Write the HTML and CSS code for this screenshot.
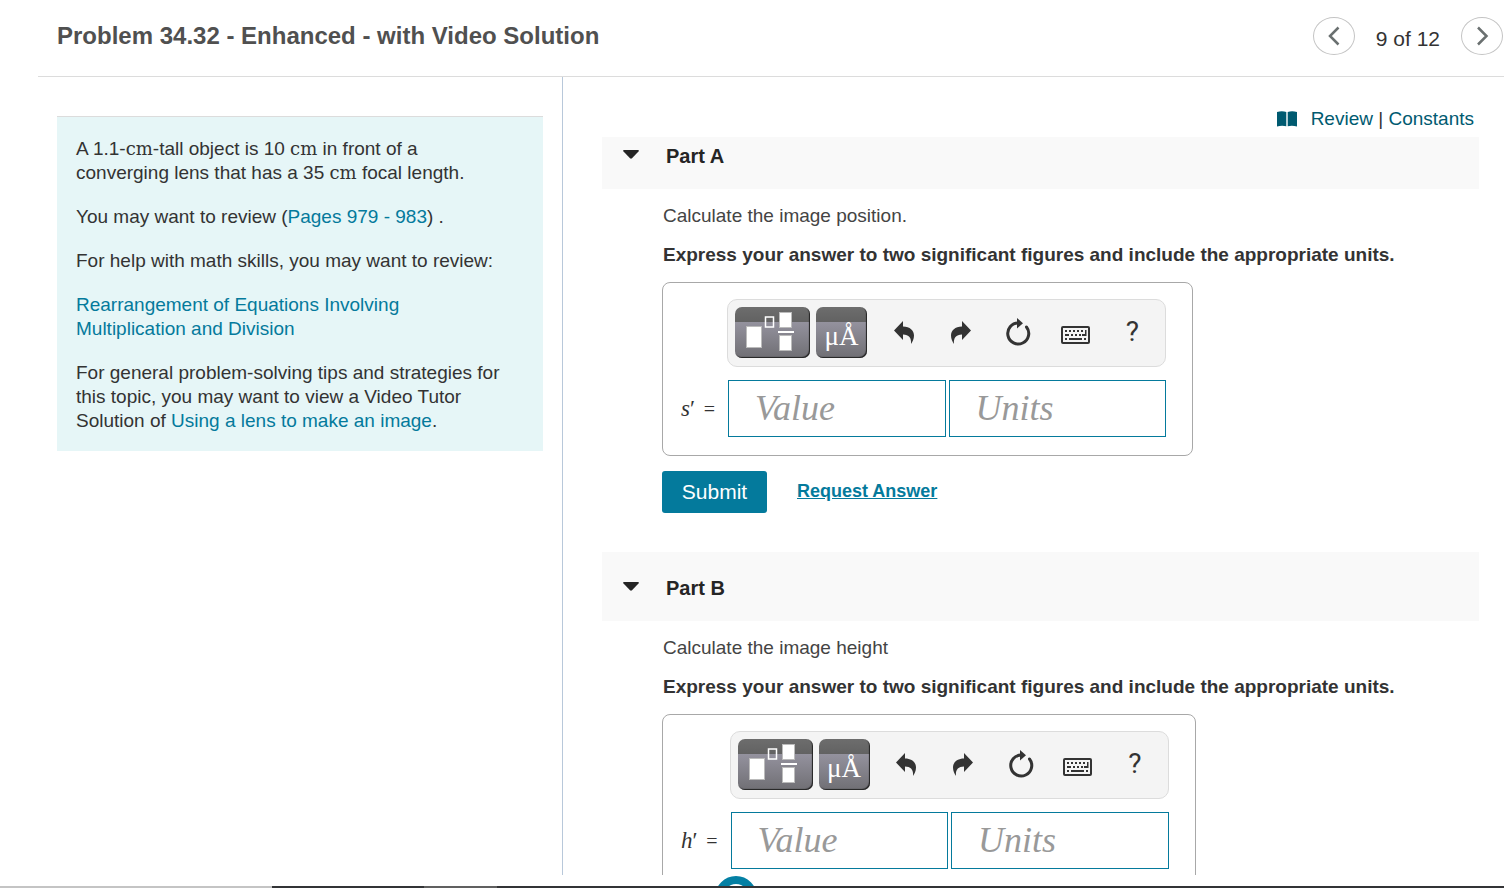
FILE: index.html
```html
<!DOCTYPE html>
<html lang="en">
<head>
<meta charset="utf-8">
<title>Problem 34.32 - Enhanced - with Video Solution</title>
<link rel="stylesheet" href="styles.css">
</head>
<body>
<svg class="defs" aria-hidden="true">
  <symbol id="undo" viewBox="0 0 20 23"><path d="M0 9.500 9 0V5.500C16 5.500 20 9.500 20 14.500 20 18 18.500 21 17 23 17.600 17 15 13.500 9 13.500V19Z"/></symbol>
  <symbol id="redo" viewBox="0 0 20 23"><path d="M20 9.500 11 0V5.500C4 5.500 0 9.500 0 14.500 0 18 1.500 21 3 23 2.400 17 5 13.500 11 13.500V19Z"/></symbol>
  <symbol id="reset" viewBox="0 0 26 28"><path d="M13.500 5A10.500 10.500 0 1 0 21.500 9" fill="none" stroke="currentColor" stroke-width="3" stroke-linecap="round"/><path d="M12 0 18 5.300 12 10.600Z"/></symbol>
  <symbol id="keyboard" viewBox="0 0 29 18"><rect x="1" y="1" width="27" height="16" rx="1" fill="none" stroke="currentColor" stroke-width="2"/><path d="M4 4h2v2H4zM8 4h2v2H8zM12 4h2v2h-2zM16 4h2v2h-2zM20 4h2v2h-2zM4 8h4v2H4zM10 8h2v2h-2zM14 8h2v2h-2zM18 8h2v2h-2zM24 4h1.500v6H21V8h3zM4 12h2v2H4zM8 12h13v2H8zM23 12h2v2h-2z"/></symbol>
  <symbol id="templates" viewBox="0 0 75 51"><g fill="#fff" stroke="#bbb" stroke-width="1"><rect x="11.500" y="19.500" width="15" height="21"/><rect x="44.500" y="5.500" width="12" height="15"/><rect x="44.500" y="28.500" width="12" height="15"/></g><rect x="30.500" y="10" width="8" height="10" fill="none" stroke="#fff" stroke-width="1.500"/><path d="M43 24h16v2H43z" fill="#fff"/></symbol>
  <symbol id="caret" viewBox="0 0 16 9"><path d="M1 0h14q1.500.3.5 1.500L9 8.300Q8 9 7 8.300L.5 1.500Q-.5.300 1 0Z"/></symbol>
</svg>

<header class="topbar">
  <h1 class="title">Problem 34.32 - Enhanced - with Video Solution</h1>
  <nav class="pager" aria-label="Item navigation">
    <button class="pager-button" aria-label="Previous item"><svg viewBox="0 0 14 20" width="14" height="20"><path d="M11.500 1.500 3 10l8.500 8.500"/></svg></button>
    <span class="pager-count">9 of 12</span>
    <button class="pager-button" aria-label="Next item"><svg viewBox="0 0 14 20" width="14" height="20"><path d="M3 1.500 11.500 10 3 18.500"/></svg></button>
  </nav>
</header>

<main class="columns">
  <aside class="side">
    <section class="intro">
      <p>A 1.1-<span class="unit">cm</span>-tall object is 10 <span class="unit">cm</span> in front of a converging lens that has a 35 <span class="unit">cm</span> focal length.</p>
      <p>You may want to review (<a href="#pages">Pages 979 - 983</a>) .</p>
      <p>For help with math skills, you may want to review:</p>
      <p><a href="#math">Rearrangement of Equations Involving<br>Multiplication and Division</a></p>
      <p>For general problem-solving tips and strategies for this topic, you may want to view a Video Tutor Solution of <a href="#video">Using a lens to make an image</a>.</p>
    </section>
  </aside>

  <div class="work">
    <div class="resources">
      <svg class="book" viewBox="0 0 20 16" width="20" height="16"><path d="M0 1Q5-.5 9.300 1V15.300Q5 14 0 15.500ZM10.700 1Q15-.5 20 1V15.500Q15 14 10.700 15.300Z"/></svg>
      <span><a href="#review">Review</a> | <a href="#constants">Constants</a></span>
    </div>

    <section class="part">
      <h2 class="part-head"><button class="part-toggle" aria-expanded="true"><svg width="16" height="9"><use href="#caret"/></svg>Part A</button></h2>
      <div class="part-body">
        <p class="question">Calculate the image position.</p>
        <p class="directions">Express your answer to two significant figures and include the appropriate units.</p>
        <div class="answer">
          <div class="toolbar">
            <button class="tool-key tool-templates" aria-label="Templates"><svg width="75" height="51"><use href="#templates"/></svg></button>
            <button class="tool-key tool-units" aria-label="Units">μÅ</button>
            <button class="tool" aria-label="Undo"><svg width="20" height="23"><use href="#undo"/></svg></button>
            <button class="tool" aria-label="Redo"><svg width="20" height="23"><use href="#redo"/></svg></button>
            <button class="tool" aria-label="Reset"><svg width="26" height="28"><use href="#reset"/></svg></button>
            <button class="tool tool-keyboard" aria-label="Keyboard shortcuts"><svg width="29" height="18"><use href="#keyboard"/></svg></button>
            <button class="tool tool-help" aria-label="Help">?</button>
          </div>
          <label class="symbol" for="value-a"><i>s</i>′ <span class="equals">=</span></label>
          <div class="fields">
            <input id="value-a" class="field" type="text" placeholder="Value">
            <input class="field" type="text" placeholder="Units" aria-label="Units">
          </div>
        </div>
        <div class="actions">
          <button class="submit">Submit</button>
          <a class="request" href="#request">Request Answer</a>
        </div>
      </div>
    </section>

    <section class="part">
      <h2 class="part-head part-head-tall"><button class="part-toggle" aria-expanded="true"><svg width="16" height="9"><use href="#caret"/></svg>Part B</button></h2>
      <div class="part-body">
        <p class="question">Calculate the image height</p>
        <p class="directions">Express your answer to two significant figures and include the appropriate units.</p>
        <div class="answer">
          <div class="toolbar">
            <button class="tool-key tool-templates" aria-label="Templates"><svg width="75" height="51"><use href="#templates"/></svg></button>
            <button class="tool-key tool-units" aria-label="Units">μÅ</button>
            <button class="tool" aria-label="Undo"><svg width="20" height="23"><use href="#undo"/></svg></button>
            <button class="tool" aria-label="Redo"><svg width="20" height="23"><use href="#redo"/></svg></button>
            <button class="tool" aria-label="Reset"><svg width="26" height="28"><use href="#reset"/></svg></button>
            <button class="tool tool-keyboard" aria-label="Keyboard shortcuts"><svg width="29" height="18"><use href="#keyboard"/></svg></button>
            <button class="tool tool-help" aria-label="Help">?</button>
          </div>
          <label class="symbol" for="value-b"><i>h</i>′ <span class="equals">=</span></label>
          <div class="fields">
            <input id="value-b" class="field" type="text" placeholder="Value">
            <input class="field" type="text" placeholder="Units" aria-label="Units">
          </div>
        </div>
      </div>
    </section>
  </div>
</main>

<footer class="footer">
  <span class="footer-badge"></span>
  <div class="strip"><span class="strip-light"></span><span class="strip-dark"></span><span class="strip-mid"></span></div>
</footer>
</body>
</html>
```

FILE: styles.css
```css
* {
  box-sizing: border-box;
}

body {
  margin: 0;
  height: 100vh;
  display: flex;
  flex-direction: column;
  overflow: hidden;
  background: #fff;
  color: #333;
  font-family: "Liberation Sans", Arial, sans-serif;
  font-size: 19px;
  line-height: 24px;
}

p,
h1,
h2 {
  margin: 0;
}

a {
  color: #047a9c;
  text-decoration: none;
}

button {
  margin: 0;
  padding: 0;
  border: 0;
  background: none;
  color: inherit;
  font: inherit;
  cursor: pointer;
}

svg {
  display: block;
  fill: currentColor;
}

.defs {
  position: absolute;
  width: 0;
  height: 0;
}

/* Header */

.topbar {
  flex: none;
  display: flex;
  align-items: center;
  justify-content: space-between;
  height: 77px;
  margin-left: 38px;
  padding: 0 1px 5px 19px;
  border-bottom: 1px solid #dcdcdc;
}

.title {
  color: #505050;
  font-size: 24px;
  line-height: 28px;
}

.pager {
  display: flex;
  align-items: center;
  gap: 21px;
}

.pager-button {
  display: grid;
  place-items: center;
  width: 42px;
  height: 38px;
  border: 1px solid #c4c4c4;
  border-radius: 50%;
  color: #6a7070;
}

.pager-button path {
  fill: none;
  stroke: currentColor;
  stroke-width: 2.5;
}

.pager-count {
  padding-top: 6px;
  font-size: 21px;
}

/* Columns */

.columns {
  flex: 1;
  min-height: 0;
  display: flex;
  overflow: hidden;
}

.side {
  flex: none;
  width: 563px;
  padding: 39px 19px 0 57px;
  border-right: 1px solid #b8c8da;
}

.intro {
  display: flex;
  flex-direction: column;
  gap: 20px;
  padding: 20px 30px 18px 19px;
  border-top: 1px solid #dcdcdc;
  background: #e6f6f7;
}

.unit {
  font-family: "DejaVu Serif", serif;
  font-size: 18px;
  line-height: 20px;
}

.work {
  flex: 1;
  min-width: 0;
  padding: 30px 25px 0 39px;
}

.resources {
  display: flex;
  align-items: center;
  justify-content: flex-end;
  gap: 14px;
  padding: 0 5px 6px 0;
}

.resources a,
.book {
  color: #005a70;
}

/* Parts */

.part-head {
  height: 52px;
  padding: 7px 0 0 21px;
  background: #f9f9f9;
  color: #252525;
  font-size: 20px;
  line-height: 24px;
}

.part-head-tall {
  height: 69px;
  padding-top: 24px;
}

.part-toggle {
  display: flex;
  align-items: center;
  gap: 27px;
}

.part-toggle svg {
  margin-bottom: 3px;
}

.part-body {
  padding: 15px 0 39px 60px;
}

.question {
  margin-bottom: 15px;
  padding-left: 1px;
  color: #444;
}

.directions {
  margin-bottom: 15px;
  padding-left: 1px;
  font-weight: bold;
}

.answer {
  display: inline-grid;
  grid-template-columns: auto 439px;
  gap: 13px 12px;
  align-items: center;
  padding: 16px 26px 18px 18px;
  border: 1px solid #a8a8a8;
  border-radius: 8px;
  vertical-align: top;
}

.toolbar {
  grid-column: 2;
  display: flex;
  align-items: center;
  height: 68px;
  padding: 0 4px 2px 7px;
  border: 1px solid #dcdcdc;
  border-radius: 10px;
  background: #f4f4f4;
}

.tool-key {
  height: 51px;
  border-radius: 7px;
  background: linear-gradient(#6d6d6d 0, #626262 15px, #94929e 15px, #706f74 100%);
  box-shadow: inset -1px -1px 1px #222;
  color: #fff;
}

.tool-templates {
  width: 75px;
  margin-right: 6px;
}

.tool-units {
  width: 51px;
  margin-right: 8px;
  padding-top: 8px;
  font-family: "Liberation Serif", serif;
  font-size: 27px;
}

.tool {
  display: grid;
  place-items: center;
  flex: 1;
  height: 51px;
}

.tool-keyboard {
  padding-top: 6px;
}

.tool-help {
  font-family: Roboto, sans-serif;
  font-size: 28px;
}

.symbol {
  font-family: "Liberation Serif", serif;
  font-size: 23px;
  white-space: nowrap;
}

.equals {
  margin-left: 3px;
  font-size: 20px;
}

.fields {
  display: grid;
  grid-template-columns: 1fr 1fr;
  gap: 3px;
  padding-left: 1px;
}

.field {
  min-width: 0;
  height: 57px;
  margin: 0;
  padding: 0 26px 2px;
  border: 1px solid #047a9c;
  border-radius: 0;
  background: #fff;
  color: #333;
  font-family: "Liberation Serif", serif;
  font-size: 36px;
}

.field::placeholder {
  color: #999;
  font-style: italic;
  opacity: 1;
}

.actions {
  display: flex;
  align-items: center;
  gap: 30px;
  padding-top: 15px;
}

.submit {
  width: 105px;
  height: 42px;
  border-radius: 3px;
  background: #047a9c;
  color: #fff;
  font-size: 21px;
}

.request {
  padding-bottom: 2px;
  font-size: 18px;
  font-weight: bold;
  text-decoration: underline;
}

/* Footer */

.footer {
  position: relative;
  flex: none;
  height: 13px;
  display: flex;
  flex-direction: column;
  justify-content: flex-end;
  overflow: hidden;
}

.footer-badge {
  position: absolute;
  top: 1px;
  left: 715px;
  width: 42px;
  height: 42px;
  border: 8px solid #0480a4;
  border-radius: 50%;
}

.strip {
  position: relative;
  display: flex;
  height: 2px;
  background: #333436;
}

.strip-light {
  width: 272px;
  background: #c4c4c4;
}

.strip-dark {
  width: 152px;
}

.strip-mid {
  width: 73px;
  background: #606060;
}
```
